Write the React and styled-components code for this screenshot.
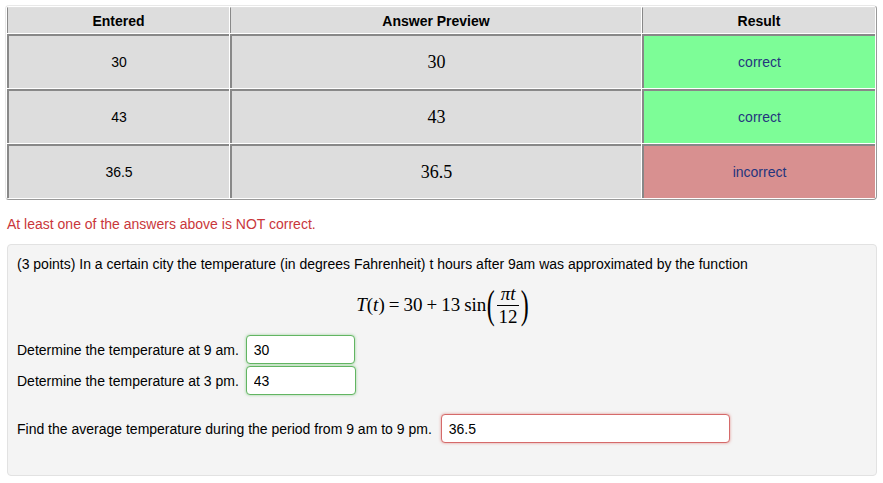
import styled, { createGlobalStyle } from "styled-components";

const GlobalStyle = createGlobalStyle`
  body {
    margin: 0;
    background: #fff;
    font-family: "Liberation Sans", Arial, sans-serif;
    font-size: 14px;
    color: #000;
  }
`;

const Page = styled.div`
  width: 872px;
  padding: 5px 6px 0 5px;
`;

const ResultsTable = styled.table`
  width: 872px;
  border-collapse: separate;
  border-spacing: 1px;
  border: 1px solid #999;
  border-top-color: #e8e8e8;
  border-left-color: #e8e8e8;
  border-radius: 4px;
`;

const HeadCell = styled.th`
  height: 25px;
  padding: 0;
  background: #ddd;
  border-top: 1px solid #e0e0e0;
  border-left: 1px solid #888;
  font-weight: bold;
  font-size: 14px;
  text-align: center;
`;

const Cell = styled.td`
  height: 52px;
  padding: 0;
  text-align: center;
  border-top: 2px solid #888;
  border-left: 2px solid #888;
  background: ${(p) =>
    p.$status === "correct" ? "#7dfd97" : p.$status === "incorrect" ? "#d89090" : "#ddd"};
  color: ${(p) => (p.$status ? "#24357e" : "#000")};
  font-size: ${(p) => (p.$math ? "18px" : "14px")};
  font-family: ${(p) =>
    p.$math ? '"Liberation Serif", "Times New Roman", serif' : '"Liberation Sans", Arial, sans-serif'};
`;

const Message = styled.div`
  margin: 15px 0 0 2px;
  line-height: 18px;
  color: #c9373b;
`;

const ProblemBox = styled.div`
  margin: 11px 0 0 2px;
  width: 850px;
  padding: 10px 9px 32px 9px;
  background: #f4f4f4;
  border: 1px solid #e2e2e2;
  border-radius: 4px;
`;

const Line = styled.div`
  line-height: 18px;
`;

const Formula = styled.div`
  display: flex;
  justify-content: center;
  align-items: center;
  height: 48px;
  margin: 8px 0 6px 0;
  padding-left: 2px;
  font-family: "Liberation Serif", "Times New Roman", serif;
  font-size: 19px;
`;

const Italic = styled.i`
  font-style: italic;
`;

const Op = styled.span`
  margin: 0 4px;
`;

const Gap = styled.span`
  margin-left: 4px;
`;

const Paren = styled.span`
  font-size: 40px;
  font-weight: 300;
  line-height: 1;
  transform: scaleX(0.6);
  margin: 0 -2px;
`;

const Fraction = styled.span`
  display: inline-flex;
  flex-direction: column;
  align-items: center;
  line-height: 22px;
  padding: 0 1px;
`;

const Numerator = styled.span`
  border-bottom: 1px solid #000;
  padding: 0 4px;
  font-style: italic;
`;

const AnswerRow = styled.div`
  display: flex;
  align-items: center;
  gap: ${(p) => p.$space || 8}px;
  margin-top: ${(p) => p.$gap || 0}px;
`;

const AnswerInput = styled.input`
  box-sizing: border-box;
  width: ${(p) => p.$width}px;
  height: 29px;
  padding: 0 7px;
  font-family: "Liberation Sans", Arial, sans-serif;
  font-size: 14px;
  color: #000;
  background: #fff;
  border-radius: 4px;
  outline: none;
  border: 1px solid ${(p) => (p.$ok ? "#62b562" : "#d56a6a")};
  box-shadow: 0 0 3px ${(p) => (p.$ok ? "rgba(92,184,92,0.6)" : "rgba(217,83,79,0.6)")};
`;

const rows = [
  { entered: "30", preview: "30", status: "correct" },
  { entered: "43", preview: "43", status: "correct" },
  { entered: "36.5", preview: "36.5", status: "incorrect" },
];

export default function App() {
  return (
    <Page>
      <GlobalStyle />
      <ResultsTable>
        <colgroup>
          <col style={{ width: 222 }} />
          <col style={{ width: 411 }} />
          <col style={{ width: 233 }} />
        </colgroup>
        <thead>
          <tr>
            <HeadCell>Entered</HeadCell>
            <HeadCell>Answer Preview</HeadCell>
            <HeadCell>Result</HeadCell>
          </tr>
        </thead>
        <tbody>
          {rows.map((r) => (
            <tr key={r.entered}>
              <Cell>{r.entered}</Cell>
              <Cell $math>{r.preview}</Cell>
              <Cell $status={r.status}>{r.status}</Cell>
            </tr>
          ))}
        </tbody>
      </ResultsTable>
      <Message>At least one of the answers above is NOT correct.</Message>
      <ProblemBox>
        <Line>
          (3 points) In a certain city the temperature (in degrees Fahrenheit) t hours after 9am was
          approximated by the function
        </Line>
        <Formula>
          <Italic>T</Italic>(<Italic>t</Italic>)<Op>=</Op>30<Op>+</Op>13<Gap />sin
          <Paren>(</Paren>
          <Fraction>
            <Numerator>πt</Numerator>
            <span>12</span>
          </Fraction>
          <Paren>)</Paren>
        </Formula>
        <AnswerRow $space={7}>
          <span>Determine the temperature at 9 am.</span>
          <AnswerInput $ok $width={109} defaultValue="30" />
        </AnswerRow>
        <AnswerRow $space={7} $gap={2}>
          <span>Determine the temperature at 3 pm.</span>
          <AnswerInput $ok $width={110} defaultValue="43" />
        </AnswerRow>
        <AnswerRow $space={9} $gap={19}>
          <span>Find the average temperature during the period from 9 am to 9 pm.</span>
          <AnswerInput $width={289} defaultValue="36.5" />
        </AnswerRow>
      </ProblemBox>
    </Page>
  );
}
